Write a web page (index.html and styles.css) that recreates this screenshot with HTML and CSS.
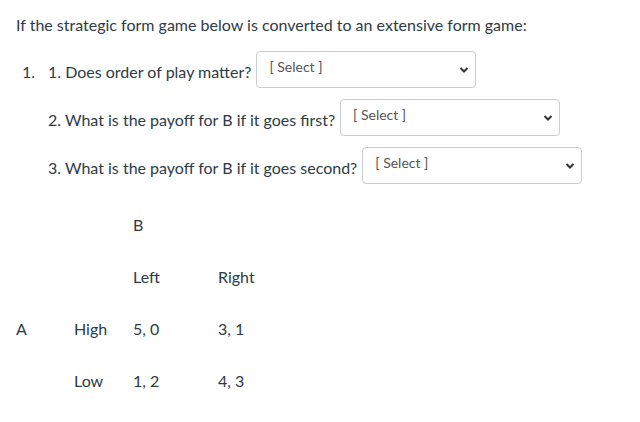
FILE: index.html
```html
<!DOCTYPE html>
<html>
<head>
<meta charset="utf-8">
<link rel="stylesheet" href="styles.css">
</head>
<body>
<div class="page">
  <p class="intro">If the strategic form game below is converted to an extensive form game:</p>
  <ol class="questions">
    <li>
      <div class="row">
        <span class="num">1.</span>
        <span class="q">1. Does order of play matter?</span>
        <div class="select"><span>[ Select ]</span><svg width="10" height="8" viewBox="0 0 10 8"><path d="M1.5 2 L5 5.5 L8.5 2" fill="none" stroke="#333" stroke-width="2"/></svg></div>
      </div>
      <div class="row">
        <span class="q">2. What is the payoff for B if it goes first?</span>
        <div class="select"><span>[ Select ]</span><svg width="10" height="8" viewBox="0 0 10 8"><path d="M1.5 2 L5 5.5 L8.5 2" fill="none" stroke="#333" stroke-width="2"/></svg></div>
      </div>
      <div class="row">
        <span class="q">3. What is the payoff for B if it goes second?</span>
        <div class="select"><span>[ Select ]</span><svg width="10" height="8" viewBox="0 0 10 8"><path d="M1.5 2 L5 5.5 L8.5 2" fill="none" stroke="#333" stroke-width="2"/></svg></div>
      </div>
    </li>
  </ol>
  <div class="game">
    <span></span><span></span><span>B</span><span></span>
    <span></span><span></span><span>Left</span><span>Right</span>
    <span>A</span><span>High</span><span>5, 0</span><span>3, 1</span>
    <span></span><span>Low</span><span>1, 2</span><span>4, 3</span>
  </div>
</div>
</body>
</html>
```
FILE: styles.css
```css
html, body {
  margin: 0;
  padding: 0;
  background: #fff;
}
.page {
  padding: 13px 16px 0 16px;
  font-family: Lato, "Open Sans", sans-serif;
  font-size: 16px;
  line-height: 24px;
  color: #2d3b45;
}
.intro {
  margin: 0 0 11px 0;
}
.questions {
  list-style: none;
  margin: 0;
  padding: 0 0 0 32px;
}
.row {
  display: flex;
  align-items: center;
  height: 48px;
  position: relative;
}
.num {
  position: absolute;
  left: -26px;
  top: 12px;
}
.q {
  margin-right: 5px;
}
.select {
  box-sizing: border-box;
  width: 220px;
  height: 37px;
  border: 1px solid #c7cdd1;
  border-radius: 4px;
  background: #fff;
  display: flex;
  align-items: center;
  justify-content: space-between;
  padding: 0 6px 2px 12px;
  font-size: 14px;
  color: #555;
  margin-top: -5px;
}
.select span {
  margin-top: -3px;
}
.select svg {
  margin-top: 3px;
}
.game {
  display: grid;
  grid-template-columns: 58px 59px 85px 100px;
  grid-auto-rows: 52px;
  align-items: center;
  margin-top: 7px;
}
```
